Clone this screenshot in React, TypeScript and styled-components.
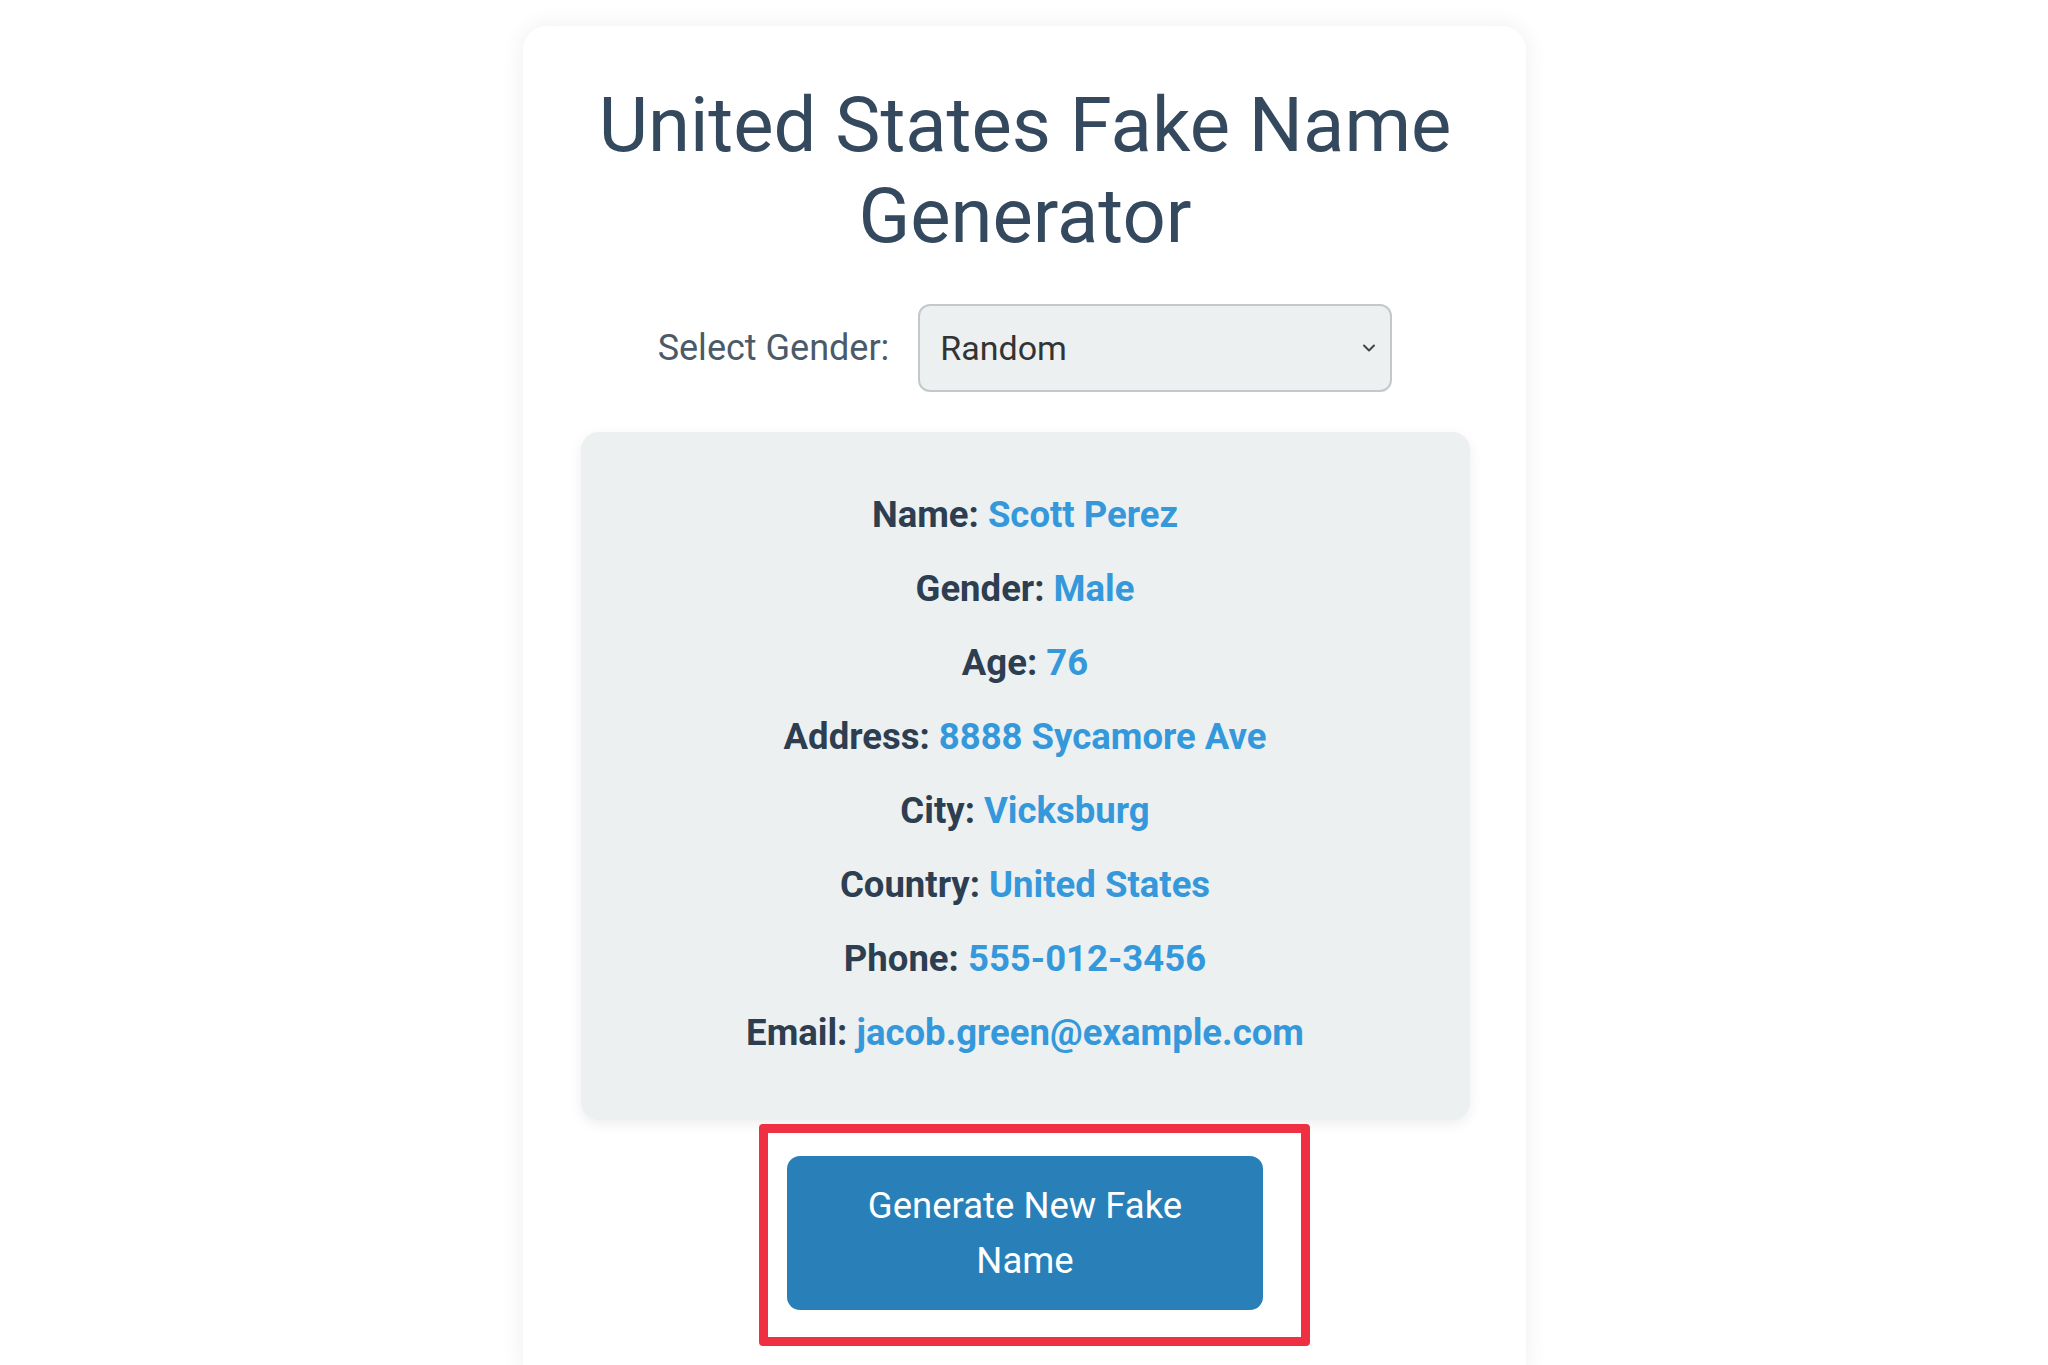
import { FC } from 'react'
import styled, { createGlobalStyle } from 'styled-components'

const GlobalStyle = createGlobalStyle({
  'html, body': {
    margin: 0,
    padding: 0,
    background: '#ffffff',
    fontFamily: 'Roboto, "Liberation Sans", Arial, sans-serif',
  },
})

type Field = {
  label: string;
  value: string;
}

const fields: Field[] = [
  { label: 'Name', value: 'Scott Perez' },
  { label: 'Gender', value: 'Male' },
  { label: 'Age', value: '76' },
  { label: 'Address', value: '8888 Sycamore Ave' },
  { label: 'City', value: 'Vicksburg' },
  { label: 'Country', value: 'United States' },
  { label: 'Phone', value: '555-012-3456' },
  { label: 'Email', value: 'jacob.green@example.com' },
]

const Page = styled('div')({
  display: 'flex',
  justifyContent: 'center',
  paddingTop: 26,
  height: 1365,
  boxSizing: 'border-box',
  overflow: 'hidden',
})

const Card = styled('main')({
  width: 1003,
  minHeight: 1360,
  boxSizing: 'border-box',
  padding: '54px 56px 60px 58px',
  background: '#ffffff',
  borderRadius: 24,
  boxShadow: '0 0 24px rgba(0, 0, 0, 0.07)',
  display: 'flex',
  flexDirection: 'column',
  alignItems: 'center',
})

const Title = styled('h1')({
  margin: 0,
  fontSize: 76,
  lineHeight: '91px',
  fontWeight: 400,
  color: '#34495e',
  textAlign: 'center',
})

const GenderRow = styled('div')({
  display: 'flex',
  alignItems: 'center',
  gap: 29,
  marginTop: 42,
})

const Label = styled('label')({
  fontSize: 36,
  color: '#4b5a69',
})

const SelectWrap = styled('div')({
  position: 'relative',
  width: 474,
  height: 88,
})

const Select = styled('select')({
  appearance: 'none',
  width: '100%',
  height: '100%',
  boxSizing: 'border-box',
  padding: '0 50px 0 20px',
  fontFamily: 'inherit',
  fontSize: 34,
  color: '#333333',
  background: '#ecf0f1',
  border: '2px solid #c3c8cb',
  borderRadius: 12,
  outline: 'none',
})

const Chevron = styled('svg')({
  position: 'absolute',
  right: 16,
  top: '50%',
  marginTop: -5,
  width: 14,
  height: 10,
  pointerEvents: 'none',
})

const InfoBox = styled('section')({
  alignSelf: 'stretch',
  marginTop: 40,
  padding: '61px 20px 65px',
  background: '#ecf0f1',
  borderRadius: 18,
  boxShadow: '0 4px 14px rgba(0, 0, 0, 0.07)',
  display: 'flex',
  flexDirection: 'column',
  alignItems: 'center',
  gap: 30,
})

const Row = styled('p')({
  margin: 0,
  fontSize: 36.5,
  lineHeight: '44px',
  fontWeight: 700,
  color: '#2c3e50',
})

const Value = styled('span')({
  color: '#3498db',
})

const ButtonArea = styled('div')({
  position: 'relative',
  marginTop: 36,
})

const GenerateButton = styled('button')({
  width: 476,
  height: 154,
  padding: '0 60px',
  border: 'none',
  borderRadius: 13,
  background: '#2980b9',
  color: '#ffffff',
  fontFamily: 'inherit',
  fontSize: 36.5,
  lineHeight: '55px',
  cursor: 'pointer',
})

const Highlight = styled('div')({
  position: 'absolute',
  left: -28,
  right: -47,
  top: -32,
  bottom: -36,
  border: '9px solid #ef2f42',
  borderRadius: 4,
  pointerEvents: 'none',
})

const App: FC = () => (
  <>
    <GlobalStyle />
    <Page>
      <Card>
        <Title>United States Fake Name Generator</Title>
        <GenderRow>
          <Label htmlFor='gender'>Select Gender:</Label>
          <SelectWrap>
            <Select id='gender' defaultValue='random'>
              <option value='random'>Random</option>
              <option value='male'>Male</option>
              <option value='female'>Female</option>
            </Select>
            <Chevron viewBox='0 0 14 10'>
              <path d='M2 2.5 L7 7.5 L12 2.5' fill='none' stroke='#444' strokeWidth='2' strokeLinecap='round' strokeLinejoin='round' />
            </Chevron>
          </SelectWrap>
        </GenderRow>
        <InfoBox>
          {fields.map(f => (
            <Row key={f.label}>
              {f.label}: <Value>{f.value}</Value>
            </Row>
          ))}
        </InfoBox>
        <ButtonArea>
          <GenerateButton>Generate New Fake Name</GenerateButton>
          <Highlight />
        </ButtonArea>
      </Card>
    </Page>
  </>
)

export default App
